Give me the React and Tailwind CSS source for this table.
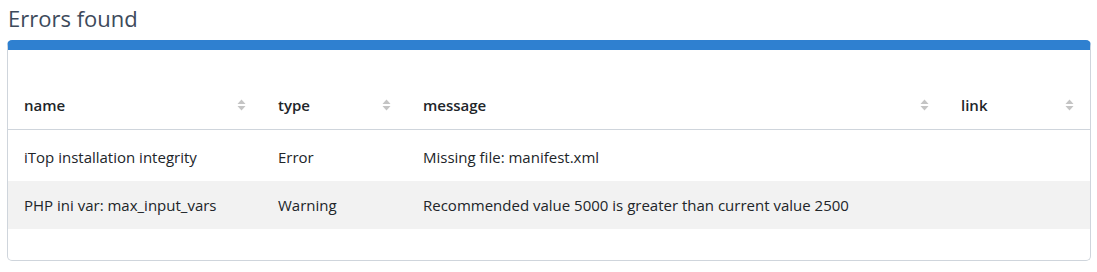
import React from 'react';

const columns = ['name', 'type', 'message', 'link'];

const rows = [
  { name: 'iTop installation integrity', type: 'Error', message: 'Missing file: manifest.xml', link: '' },
  { name: 'PHP ini var: max_input_vars', type: 'Warning', message: 'Recommended value 5000 is greater than current value 2500', link: '' },
];

function SortIcon() {
  return (
    <svg width="9" height="12" viewBox="0 0 9 12" className="shrink-0">
      <path d="M4.5 0.5 L8.5 5 L0.5 5 Z" fill="#c4c4c4" />
      <path d="M4.5 11.5 L8.5 7 L0.5 7 Z" fill="#c4c4c4" />
    </svg>
  );
}

export default function App() {
  return (
    <div className="bg-white w-[1097px] h-[272px] text-[#212529]" style={{ fontFamily: '"Open Sans", Lato, sans-serif' }}>
      {/* Title */}
      <h2 className="h-[40px] pl-[8px] pt-[1px] text-[22px] leading-[34px] text-[#3d4a5b]">Errors found</h2>

      {/* Card */}
      <div className="ml-[7px] w-[1084px] rounded-[5px] border border-[#cfd5dc] border-t-[10px] border-t-[#2f80d0] pt-[31px] pb-[31px]">
        {/* Header */}
        <div className="grid grid-cols-[254px_145px_538px_145px] h-[49px] border-b border-[#cfd5dc] text-[15px] font-semibold">
          {columns.map((col) => (
            <div key={col} className="flex items-center justify-between px-[16px]">
              <span>{col}</span>
              <SortIcon />
            </div>
          ))}
        </div>

        {/* Rows */}
        {rows.map((row, i) => (
          <div
            key={i}
            className={`grid grid-cols-[254px_145px_538px_145px] text-[15px] ${
              i % 2 === 1 ? 'bg-[#f2f2f2] h-[48px]' : 'h-[51px] pt-[3px]'
            }`}
          >
            <div className="flex items-center px-[16px]">{row.name}</div>
            <div className="flex items-center px-[16px]">{row.type}</div>
            <div className="flex items-center px-[16px]">{row.message}</div>
            <div className="flex items-center px-[16px]">{row.link}</div>
          </div>
        ))}
      </div>
    </div>
  );
}
